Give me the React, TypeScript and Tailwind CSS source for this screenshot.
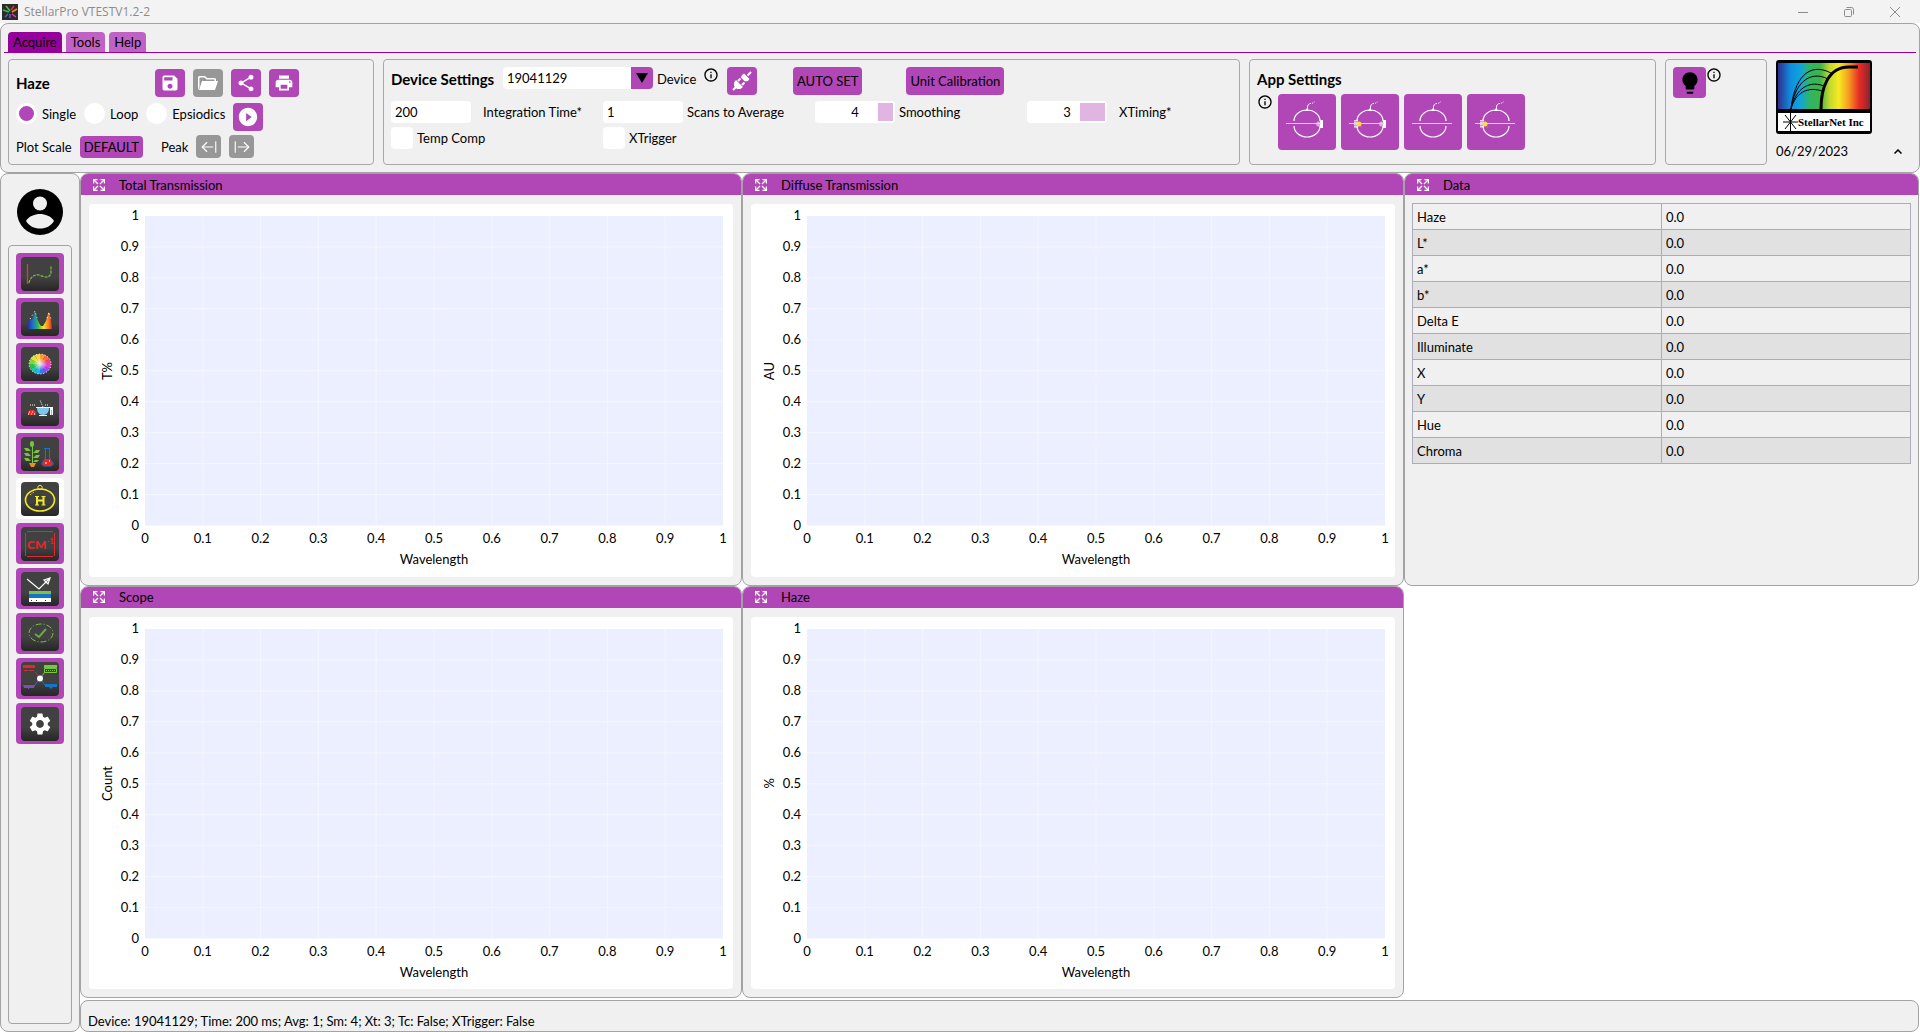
import { useState, type ReactNode } from "react";
import { MdLightbulb, MdOutlineInfo, MdPlayCircleFilled, MdPrint, MdSave, MdSettings, MdShare } from "react-icons/md";
import { ArrowLeftFromLine, ArrowRightFromLine } from "lucide-react";
import clsx from "clsx";

const tabs = ["Acquire", "Tools", "Help"] as const;
const modes = ["Single", "Loop", "Epsiodics"] as const;
const ticks = [0, 1, 2, 3, 4, 5, 6, 7, 8, 9, 10];

const rows = [
  ["Haze", "0.0"],
  ["L*", "0.0"],
  ["a*", "0.0"],
  ["b*", "0.0"],
  ["Delta E", "0.0"],
  ["Illuminate", "0.0"],
  ["X", "0.0"],
  ["Y", "0.0"],
  ["Hue", "0.0"],
  ["Chroma", "0.0"],
];

const wheel = ["#ff9a2e", "#ff6a3a", "#f2418a", "#e63fd0", "#9a4bf0", "#3f74f5", "#22b5f0", "#1fc7a0", "#2fbf4a", "#7ed63a", "#d8e63a", "#ffd23a"];

function wedge(i: number) {
  const a = ((i * 30 - 90) * Math.PI) / 180;
  const b = (((i + 1) * 30 - 90) * Math.PI) / 180;
  return `M19 17 L${19 + 11 * Math.cos(a)} ${17 + 10 * Math.sin(a)} A11 10 0 0 1 ${19 + 11 * Math.cos(b)} ${17 + 10 * Math.sin(b)} Z`;
}

const apps: { name: string; icon: ReactNode }[] = [
  {
    name: "Spectra",
    icon: (
      <g fill="none">
        <path d="M6.500 7v20" stroke="#e23b2e" strokeWidth="1.300" />
        <path d="M8 26c1-6 6-9 10-8s10 5 12-2V9" stroke="#7cc243" strokeWidth="1.200" strokeDasharray="3 1" />
      </g>
    ),
  },
  {
    name: "Peaks",
    icon: (
      <g>
        <defs>
          <linearGradient id="peaks">
            <stop offset="0" stopColor="#2b2f9c" />
            <stop offset=".2" stopColor="#1c6fd0" />
            <stop offset=".4" stopColor="#2fb457" />
            <stop offset=".65" stopColor="#f2e52a" />
            <stop offset=".85" stopColor="#f58220" />
            <stop offset="1" stopColor="#e5262a" />
          </linearGradient>
        </defs>
        <path d="M7 27v-7l2-3 2 1 2-6 1-3 2 7 2 5 2 3h2l3-5 2-7 1-2 2 8 1 9z" fill="url(#peaks)" />
        <path d="M9 17l5-8 2 7M26 16l2-6 2 7" stroke="#fff" strokeDasharray="1 3" fill="none" />
      </g>
    ),
  },
  {
    name: "Color",
    icon: (
      <g>
        <defs>
          <radialGradient id="wheel">
            <stop offset="0" stopColor="#fff" stopOpacity=".9" />
            <stop offset=".7" stopColor="#fff" stopOpacity="0" />
          </radialGradient>
        </defs>
        {wheel.map((c, i) => <path key={c} d={wedge(i)} fill={c} />)}
        <ellipse cx="19" cy="17" rx="10" ry="9" fill="url(#wheel)" />
        <ellipse cx="19" cy="17" rx="11" ry="10" stroke="#fff" strokeDasharray="1 2" fill="none" />
      </g>
    ),
  },
  {
    name: "Chemistry",
    icon: (
      <g>
        <path d="M7 23v-3l2-2h4l2 2v3z" fill="#e5322d" />
        <path d="M8 20h6M7 22h8" stroke="#fff" strokeDasharray="1 2" />
        <path d="M9 13h5M22 15l-3-7M24 13h4" stroke="#fff" strokeDasharray="1 1" />
        <path d="M16 16h12c0 4-2 7-6 7s-6-3-6-7z" fill="#7cc8ee" />
        <path d="M15 15.500h14M18 23.500h8" stroke="#e8f6ff" />
        <path d="M29 15h3v8h-3z" fill="#fff" />
        <path d="M30 18h1v5h-1z" fill="#f5a623" />
      </g>
    ),
  },
  {
    name: "Biology",
    icon: (
      <g>
        <path d="M11.500 5v21" stroke="#7cc243" />
        <g fill="#7cc243">
          <ellipse cx="11" cy="7" rx="2" ry="3" />
          <path d="M10 14H5l-2-3h4zM12 16h5l2-3h-4zM10 19H5l-2-3h4zM12 21h5l2-3h-4zM10 24H5l-2-3h4zM12 25h4l2-2h-4z" />
        </g>
        <path d="M8 26h7l-2 4h-3z" fill="#f08a24" />
        <path d="M23 11.500h6M24.500 12v9l-4 6 2 2h8l2-2-4-6v-9" stroke="#1878c8" fill="none" />
        <path d="M24 22h5l3 5-2 2h-7l-2-2z" fill="#e5262a" />
        <path d="M24 26h2M28 24h1" stroke="#fff" />
      </g>
    ),
  },
  {
    name: "Haze",
    icon: (
      <g stroke="#f2ea22" fill="none">
        <ellipse cx="19" cy="18" rx="14.500" ry="11" strokeWidth="1.600" />
        <circle cx="19" cy="5.500" r="2.200" />
        <path d="M9 13l4-3" strokeDasharray="1 1" />
        <path d="M16 14v9M22.500 14v9M16 18.500h7" strokeWidth="2" />
        <path d="M14 14.500h4M14 23h4M20.500 14.500h4M20.500 23h4" />
      </g>
    ),
  },
  {
    name: "Raman",
    icon: (
      <g>
        <path d="M6 4.500h26M4.500 6v23M33.500 6v23M6 29.500h26" stroke="#e5262a" fill="none" />
        <text x="6" y="22" fill="#e5262a" className="text-[12px] font-black">CM</text>
        <text x="26" y="17" fill="#e5262a" className="text-[7px] font-black">-1</text>
      </g>
    ),
  },
  {
    name: "Thin Film",
    icon: (
      <g>
        <path d="M6 7l12 10L29 6M23 8l6-2-2 6-2-2z" stroke="#fff" strokeWidth="1.200" fill="none" />
        <path d="M8 19h22v3H8z" fill="#7cc243" />
        <path d="M8 22h22v4H8z" fill="#1773c4" />
        <path d="M8 26h22v4H8z" fill="#fff" />
        <path d="M10 28.500h1M15 28.500h1M24 28.500h1" stroke="#333" />
      </g>
    ),
  },
  {
    name: "Quality",
    icon: (
      <g stroke="#7cc243" fill="none">
        <ellipse cx="20" cy="16" rx="12" ry="9" strokeDasharray="6 2 1 2" />
        <path d="M14 17l4 3 7-8" strokeWidth="2" stroke="#6aa84a" />
      </g>
    ),
  },
  {
    name: "Network",
    icon: (
      <g>
        <path d="M19 16l-5-6" stroke="#e5262a" />
        <path d="M20 15l4-5" stroke="#7cc243" />
        <path d="M18 17l-4 6" stroke="#7d4fb0" />
        <path d="M20 18l4 5" stroke="#1773c4" />
        <path d="M2 3h12v3H2zM3 8h4v1H3zM8 8h5v1H8z" fill="#e5262a" />
        <path d="M23 3h13v3H23z" fill="#7cc243" />
        <path d="M23.500 6.500h12v4h-12z" stroke="#7cc243" fill="none" />
        <path d="M25 8.500h9" stroke="#7cc243" strokeDasharray="1 1" />
        <path d="M2 23h12l-1 3H8v1H7v-1H3z" fill="#7d4fb0" />
        <path d="M24 22h12v3h-4l-2 2-2-2h-4z" fill="#1773c4" />
        <circle cx="19" cy="16.500" r="3" fill="#fff" />
      </g>
    ),
  },
  { name: "Settings", icon: <MdSettings x={6} y={4} width={26} height={26} size={26} color="#fff" /> },
];

const sphereSetups = [
  { name: "Port closed", source: false, block: true },
  { name: "Sample and port closed", source: true, block: true },
  { name: "Port open", source: false, block: false },
  { name: "Sample, port open", source: true, block: false },
];

function Sphere({ source, block }: { source: boolean; block: boolean }) {
  return (
    <svg viewBox="0 0 58 56" className="h-14 w-[58px]" fill="none" aria-hidden="true">
      <path d="M16 27a13 11 0 0 1 26 0M16 32a13 11 0 0 0 26 0" stroke="#fff" strokeWidth="1.200" />
      <path d="M27 17l2-3 2 3z" fill="#fff" />
      <path d="M29.500 15v-3l2-2.500" stroke="#fff" />
      <path d="M32 9.500h2l3-2" stroke="#fff" strokeDasharray="1 1" />
      {block && <path d="M42 26h3v8h-3z" fill="#fff" />}
      {block && <circle cx="40.500" cy="30" r="2.500" fill="#fff" opacity=".55" />}
      {source && (
        <g>
          <path d="M13 26h4v8h-4z" fill="#fff" opacity=".45" />
          <path d="M14 26v8M16 26v8" stroke="#fff" strokeDasharray="1 1" />
          <circle cx="18" cy="30" r="2.500" fill="#f4dc4a" />
          <path d="M19 33h2" stroke="#f05a5a" />
        </g>
      )}
      <path d={block ? "M8 29.500h35" : "M8 29.500h40"} stroke="#f5dc6e" />
    </svg>
  );
}

function PlugIcon() {
  return (
    <svg viewBox="0 0 22 22" className="size-[22px]" fill="#fff" aria-hidden="true">
      <path d="M13 3.500l5.500 5.500-1.500 2-3 .5-4-4L11 5z" />
      <path d="M5 10l7 7-2.500 2H6L3 16v-3.500z" />
      <path d="M16.500 5.500L20 2M5.500 16.500L2 20M7 11l2.500-2.500M11 15l2.500-2.500" stroke="#fff" strokeWidth="2" />
    </svg>
  );
}

function FolderIcon() {
  return (
    <svg viewBox="0 0 20 16" className="h-4 w-5" fill="#fff" aria-hidden="true">
      <path d="M0 15V2l1-1h6l2 2h8l1 1v2h-1.500V4.500H8.500l-2-2h-5V12z" />
      <path d="M4 6h16l-3 9H1z" />
    </svg>
  );
}

function ExpandIcon() {
  return (
    <svg viewBox="0 0 12 12" className="size-3" fill="none" stroke="#fff" strokeWidth="1.300" aria-hidden="true">
      <path d="M.6 4.500V.6h3.900M7.500.6h3.900v3.900M11.400 7.500v3.900H7.500M4.500 11.400H.6V7.500" />
      <path d="M1 1l4 4M11 1L7 5M11 11L7 7M1 11l4-4" />
    </svg>
  );
}

function Logo() {
  return (
    <svg viewBox="0 0 96 74" className="h-[74px] w-24" role="img" aria-label="StellarNet Inc">
      <defs>
        <linearGradient id="spectrum">
          <stop offset="0" stopColor="#2f2f8f" />
          <stop offset=".14" stopColor="#0d8fe0" />
          <stop offset=".25" stopColor="#12a5d8" />
          <stop offset=".34" stopColor="#2fb566" />
          <stop offset=".46" stopColor="#3cb54a" />
          <stop offset=".56" stopColor="#c4d82e" />
          <stop offset=".66" stopColor="#f6ea22" />
          <stop offset=".77" stopColor="#f59a20" />
          <stop offset=".88" stopColor="#e82c26" />
          <stop offset="1" stopColor="#8f2230" />
        </linearGradient>
      </defs>
      <rect width="96" height="74" rx="3" fill="#000" />
      <path d="M2 3h92v46H2z" fill="url(#spectrum)" />
      <path d="M2 53h92v18H2z" fill="#fff" />
      <g fill="none" stroke="#000">
        <path d="M45 49C45 28 52 7 73 7h9" strokeWidth="3" />
        <path d="M15 49C18 20 32 1 55 13M15 49c3-23 17-40 37-30M15 49c3-16 15-30 33-23M15 49c3-12 13-24 31-18" />
        <path d="M14.500 52v20M7 62h15M9 55l11 14M20 55L9 69" />
      </g>
      <text x="22" y="66" className="font-['Liberation_Serif',serif] text-[11px] font-bold">StellarNet Inc</text>
    </svg>
  );
}

function ToolButton({ label, children, muted, className }: { label: string; children: ReactNode; muted?: boolean; className?: string }) {
  return (
    <button
      type="button"
      aria-label={label}
      className={clsx("flex items-center justify-center rounded", muted ? "bg-[#979797]" : "bg-[#b146b6]", className ?? "h-7 w-[30px]")}
    >
      {children}
    </button>
  );
}

function Group({ children, className }: { children: ReactNode; className?: string }) {
  return <section className={clsx("min-w-0 rounded border border-[#a8a8a8]", className)}>{children}</section>;
}

function Panel({ title, children }: { title: string; children: ReactNode }) {
  return (
    <section className="flex min-w-0 flex-col overflow-hidden rounded-lg border border-[#a3a3a3] bg-[#f0f0f0]">
      <header className="flex h-[21px] items-center gap-3.5 bg-[#b146b6] px-3">
        <button type="button" aria-label={`Expand ${title}`}>
          <ExpandIcon />
        </button>
        <h2>{title}</h2>
      </header>
      {children}
    </section>
  );
}

function Plot({ yLabel }: { yLabel: string }) {
  return (
    <div className="mx-2 mt-[9px] mb-2 flex flex-1 rounded bg-white pt-3 pr-2.5 pb-[51px] pl-2.5">
      <div className="flex w-[46px] items-center">
        <span className="w-4 rotate-180 text-center leading-4 [writing-mode:vertical-rl]">{yLabel}</span>
      </div>
      <svg className="h-full min-h-40 w-full flex-1 overflow-visible" role="img" aria-label={`${yLabel} against wavelength`}>
        <rect width="100%" height="100%" fill="#ecefff" />
        {ticks.map((t) => (
          <g key={t}>
            {t > 0 && t < 10 && (
              <g stroke="#f4f7ff">
                <line x1={`${t * 10}%`} x2={`${t * 10}%`} y1="0" y2="100%" />
                <line y1={`${t * 10}%`} y2={`${t * 10}%`} x1="0" x2="100%" />
              </g>
            )}
            <text x={`${t * 10}%`} y="100%" dy="17" textAnchor="middle">{t / 10}</text>
            <text x="-6" y={`${100 - t * 10}%`} dy="4" textAnchor="end">{t / 10}</text>
          </g>
        ))}
        <text x="50%" y="100%" dy="38" textAnchor="middle">Wavelength</text>
      </svg>
    </div>
  );
}

function NumberField({ id, label, initial, wide }: { id: string; label: string; initial: string; wide?: boolean }) {
  const [value, setValue] = useState(initial);
  return (
    <div className={clsx("flex w-[212px] shrink-0 items-center", wide ? "gap-3" : "gap-1")}>
      <input id={id} value={value} onChange={(e) => setValue(e.target.value)} className="h-[22px] w-20 rounded bg-white px-1" />
      <label htmlFor={id}>{label}</label>
    </div>
  );
}

function SliderField({ id, label, initial, max, wide }: { id: string; label: string; initial: number; max: number; wide?: boolean }) {
  const [value, setValue] = useState(initial);
  return (
    <div className={clsx("flex items-center", wide ? "gap-3" : "w-[212px] shrink-0 gap-1")}>
      <div className="relative h-[22px] w-20 rounded bg-white p-0.5">
        <input
          id={id}
          type="range"
          min={0}
          max={max}
          value={value}
          onChange={(e) => setValue(Number(e.target.value))}
          className={clsx(
            "block h-[18px] w-full appearance-none bg-transparent [&::-webkit-slider-thumb]:h-[18px] [&::-webkit-slider-thumb]:appearance-none [&::-webkit-slider-thumb]:bg-[#e0b5e2]",
            wide ? "[&::-webkit-slider-thumb]:w-[25px]" : "[&::-webkit-slider-thumb]:w-[15px]",
          )}
        />
        <span className="pointer-events-none absolute inset-0 text-center leading-[22px]">{value}</span>
      </div>
      <label htmlFor={id}>{label}</label>
    </div>
  );
}

function CheckField({ id, label }: { id: string; label: string }) {
  return (
    <div className="flex w-[212px] items-center gap-1">
      <input id={id} type="checkbox" className="size-[22px] appearance-none rounded bg-white checked:bg-[#b146b6]" />
      <label htmlFor={id}>{label}</label>
    </div>
  );
}

export default function App() {
  const [tab, setTab] = useState<string>("Acquire");
  const [mode, setMode] = useState<string>("Single");
  const [app, setApp] = useState("Haze");

  return (
    <div className="flex min-h-screen flex-col bg-white font-['Lato',sans-serif] text-[13px] leading-4 text-black">
      <header className="flex h-[23px] items-center gap-1.5 bg-[#f3f3f3] px-0.5 text-[#8c8c8c]">
        <svg viewBox="0 0 16 16" className="size-4" fill="none" strokeWidth="1.500" aria-hidden="true">
          <path d="M0 0h16v16H0z" fill="#2b2b2b" />
          <path d="M8 7L4 2" stroke="#58b947" />
          <path d="M9 6l3-4" stroke="#e5322d" />
          <path d="M7 8L1 6" stroke="#3fb56a" />
          <path d="M10 8l5-3" stroke="#f28a24" />
          <path d="M6 10l-3 3" stroke="#2a78d0" />
          <path d="M8 10v4" stroke="#7d4fd0" />
          <path d="M10 10l4 3" stroke="#e03fa0" />
        </svg>
        <h1 className="flex-1 font-['Open_Sans',sans-serif] text-xs">StellarPro VTESTV1.2-2</h1>
        <div className="flex gap-9 pr-[18px]">
          <button type="button" aria-label="Minimize">
            <svg viewBox="0 0 10 10" className="size-2.5" stroke="currentColor"><path d="M0 5.500h10" /></svg>
          </button>
          <button type="button" aria-label="Restore">
            <svg viewBox="0 0 10 10" className="size-2.5" stroke="currentColor" fill="none">
              <rect x=".5" y="2.500" width="7" height="7" rx="1" />
              <path d="M2.500.5h5a2 2 0 0 1 2 2v5" />
            </svg>
          </button>
          <button type="button" aria-label="Close">
            <svg viewBox="0 0 10 10" className="size-2.5" stroke="currentColor"><path d="M0 0l10 10M10 0L0 10" /></svg>
          </button>
        </div>
      </header>

      <div className="rounded-lg border border-[#a3a3a3] bg-[#f0f0f0] pb-[7px]">
        <nav className="mx-[3px] flex gap-1 border-b border-[#9b009b] px-1 pt-2">
          {tabs.map((t) => (
            <button
              key={t}
              type="button"
              onClick={() => setTab(t)}
              className={clsx("h-5 rounded-t px-[5px]", t === tab ? "bg-[#96009b]" : "bg-[#c062c4]")}
            >
              {t}
            </button>
          ))}
        </nav>

        <div className="mx-[7px] mt-1.5 grid grid-cols-[366fr_857fr_407fr_102fr_136fr] gap-[9px]">
          <Group className="flex flex-col gap-1 p-[7px] pt-[9px] pb-1.5">
            <div className="flex items-center">
              <h2 className="w-[139px] text-[15px] font-bold">Haze</h2>
              <div className="flex gap-2">
                <ToolButton label="Save"><MdSave className="size-5 text-white" /></ToolButton>
                <ToolButton label="Open" muted><FolderIcon /></ToolButton>
                <ToolButton label="Share"><MdShare className="size-5 text-white" /></ToolButton>
                <ToolButton label="Print"><MdPrint className="size-5 text-white" /></ToolButton>
              </div>
            </div>
            <div className="mt-0.5 flex items-start gap-2">
              {modes.map((m) => (
                <label key={m} className="flex items-center gap-[5px]">
                  <input
                    type="radio"
                    name="mode"
                    checked={mode === m}
                    onChange={() => setMode(m)}
                    className="size-[21px] appearance-none rounded-full border-[3px] border-white bg-white checked:bg-[#b146b6]"
                  />
                  {m}
                </label>
              ))}
              <ToolButton label="Run"><MdPlayCircleFilled className="size-[22px] text-white" /></ToolButton>
            </div>
            <div className="flex items-center gap-2">
              <span>Plot Scale</span>
              <button type="button" className="h-[22px] rounded bg-[#b146b6] px-1">DEFAULT</button>
              <span className="ml-2.5">Peak</span>
              <ToolButton label="Previous peak" muted className="h-[23px] w-[25px]"><ArrowLeftFromLine className="size-[18px] text-white" strokeWidth={1.5} /></ToolButton>
              <ToolButton label="Next peak" muted className="h-[23px] w-[25px]"><ArrowRightFromLine className="size-[18px] text-white" strokeWidth={1.5} /></ToolButton>
            </div>
          </Group>

          <Group className="flex flex-col p-[7px]">
            <div className="flex items-start">
              <h2 className="mt-0.5 w-28 text-[15px] leading-5 font-bold">Device Settings</h2>
              <div className="relative">
                <select id="device" className="h-[22px] w-[150px] appearance-none rounded bg-white px-1">
                  <option>19041129</option>
                </select>
                <span className="pointer-events-none absolute inset-y-0 right-0 flex w-[22px] items-center justify-center rounded-r bg-[#b146b6]">
                  <svg viewBox="0 0 12 10" className="h-2.5 w-3"><path d="M0 0h12L6 10z" /></svg>
                </span>
              </div>
              <label htmlFor="device" className="ml-1 w-[46px] leading-6">Device</label>
              <MdOutlineInfo className="size-4" />
              <ToolButton label="Connect" className="ml-2 h-7 w-[30px]"><PlugIcon /></ToolButton>
              <button type="button" className="ml-9 h-7 rounded bg-[#b146b6] px-1">AUTO SET</button>
              <button type="button" className="ml-11 h-7 rounded bg-[#b146b6] px-1">Unit Calibration</button>
            </div>
            <div className="mt-1.5 flex">
              <NumberField id="integration" label="Integration Time*" initial="200" wide />
              <NumberField id="scans" label="Scans to Average" initial="1" />
              <SliderField id="smoothing" label="Smoothing" initial={4} max={4} />
              <SliderField id="xtiming" label="XTiming*" initial={3} max={3} wide />
            </div>
            <div className="mt-1 flex">
              <CheckField id="tempcomp" label="Temp Comp" />
              <CheckField id="xtrigger" label="XTrigger" />
            </div>
          </Group>

          <Group className="p-[7px]">
            <h2 className="mt-0.5 text-[15px] leading-5 font-bold">App Settings</h2>
            <div className="mt-[5px] flex items-start gap-[5px]">
              <MdOutlineInfo className="size-4" />
              {sphereSetups.map((s) => (
                <button key={s.name} type="button" aria-label={s.name} className="rounded bg-[#b146b6]">
                  <Sphere source={s.source} block={s.block} />
                </button>
              ))}
            </div>
          </Group>

          <Group className="flex items-start p-[7px]">
            <ToolButton label="Lamp" className="h-[31px] w-[33px]"><MdLightbulb className="size-[26px]" /></ToolButton>
            <MdOutlineInfo className="size-4" />
          </Group>

          <div className="flex min-w-0 flex-col justify-between pt-px pb-1.5">
            <Logo />
            <div className="flex items-center justify-between pr-2.5">
              <span>06/29/2023</span>
              <button type="button" aria-label="Collapse toolbar">
                <svg viewBox="0 0 8 5" className="h-[5px] w-2" fill="none" stroke="#000" strokeWidth="1.500"><path d="M.5 4.500L4 1l3.500 3.500" /></svg>
              </button>
            </div>
          </div>
        </div>
      </div>

      <div className="flex flex-1 pr-px">
        <aside className="flex w-20 flex-col rounded-lg border border-[#a3a3a3] bg-[#f0f0f0] px-[7px] pt-[15px] pb-[7px]">
          <button type="button" aria-label="Account" className="self-center">
            <svg viewBox="0 0 46 46" className="size-[46px]">
              <circle cx="23" cy="23" r="23" />
              <circle cx="23" cy="14.500" r="7" fill="#f0f0f0" />
              <path d="M9 32C12 27 18 25 23 25s11 2 14 7c-3 5-8 7.500-14 7.500S12 37 9 32z" fill="#f0f0f0" />
            </svg>
          </button>
          <div className="mt-2.5 flex flex-1 flex-col items-center gap-1 rounded border border-[#a3a3a3] pt-[7px]">
            {apps.map((a) => (
              <button
                key={a.name}
                type="button"
                aria-label={a.name}
                onClick={() => setApp(a.name)}
                className={clsx("flex h-[41px] w-12 items-center justify-center rounded", app === a.name ? "bg-white" : "bg-[#b146b6]")}
              >
                <svg viewBox="0 0 38 34" className="h-[34px] w-[38px] rounded-sm bg-linear-to-b from-[#414141] from-60% to-[#262626]">
                  {a.icon}
                </svg>
              </button>
            ))}
          </div>
        </aside>

        <main className="flex min-w-0 flex-1 flex-col">
          <div className="grid flex-1 grid-cols-[662fr_662fr_515fr] grid-rows-2">
            <Panel title="Total Transmission"><Plot yLabel="T%" /></Panel>
            <Panel title="Diffuse Transmission"><Plot yLabel="AU" /></Panel>
            <Panel title="Data">
              <table className="mx-[7px] mt-2 border-collapse border border-[#8f8fa3]">
                <tbody>
                  {rows.map(([name, value]) => (
                    <tr key={name} className="h-[26px] even:bg-[#e1e1e1]">
                      <th scope="row" className="w-1/2 border border-[#acacbc] px-1 text-left font-normal">{name}</th>
                      <td className="w-1/2 border border-[#acacbc] px-1">{value}</td>
                    </tr>
                  ))}
                </tbody>
              </table>
            </Panel>
            <Panel title="Scope"><Plot yLabel="Count" /></Panel>
            <Panel title="Haze"><Plot yLabel="%" /></Panel>
          </div>
          <footer className="mt-0.5 flex h-8 items-end rounded-lg border border-[#a3a3a3] bg-[#f0f0f0] px-[7px] pb-0.5">
            Device: 19041129; Time: 200 ms; Avg: 1; Sm: 4; Xt: 3; Tc: False; XTrigger: False
          </footer>
        </main>
      </div>
    </div>
  );
}
